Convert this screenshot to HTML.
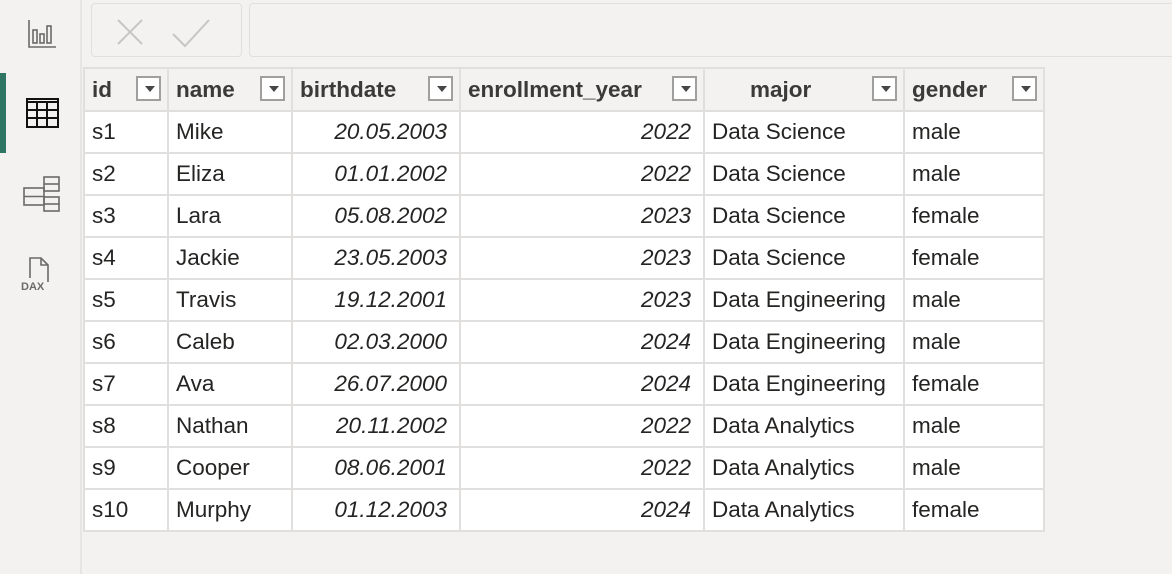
<!DOCTYPE html>
<html><head><style>
body{margin:0;width:1172px;height:574px;background:#f3f2f1;position:relative;overflow:hidden;font-family:"Liberation Sans",sans-serif;}
.side{position:absolute;left:0;top:0;width:80px;height:574px;background:#f3f2f1;border-right:2px solid #e6e5e3;}
.ind{position:absolute;left:0;top:73px;width:6px;height:80px;background:#2f7563;}
.box{position:absolute;top:3px;height:52px;border:1px solid #e1dfdd;border-radius:4px;background:#f3f2f1;}
table{position:absolute;left:83px;top:67px;border-collapse:collapse;table-layout:fixed;}
td,th{border:2px solid #e1dfdd;height:40px;padding:0 7px;font-size:22.5px;color:#252423;white-space:nowrap;overflow:hidden;}
th{background:#f3f2f1;font-weight:bold;color:#3b3a39;text-align:left;position:relative;height:41px;}
th .dd{position:absolute;right:6px;top:7px;width:25px;height:25px;border:2px solid #a19f9d;background:#fff;box-sizing:border-box;}
th .dd:after{content:"";position:absolute;left:7px;top:8px;border-left:5px solid transparent;border-right:5px solid transparent;border-top:6px solid #484644;}
td{background:#fff;}
td.r{text-align:right;font-style:italic;padding-right:12px;}
</style></head><body>
<div class="side">
<svg style="position:absolute;left:27px;top:20px" width="30" height="28" viewBox="0 0 30 28" fill="none" stroke="#6b6a69" stroke-width="1.6"><path d="M2 0V27H29"/><rect x="6" y="10" width="4" height="13"/><rect x="13" y="14" width="4" height="9"/><rect x="20" y="6" width="4" height="17"/></svg>
<svg style="position:absolute;left:26px;top:98px" width="33" height="30" viewBox="0 0 33 30" fill="none" stroke="#111" stroke-width="2"><rect x="1" y="1" width="31" height="28"/><path d="M1 4H32M1 12H32M1 20H32M11 4V29M21 4V29"/></svg>
<svg style="position:absolute;left:23px;top:176px" width="38" height="36" viewBox="0 0 38 36" fill="none" stroke="#6b6a69" stroke-width="1.6"><rect x="1" y="12" width="20" height="17"/><path d="M1 20.5H21"/><rect x="21" y="1" width="15" height="14"/><path d="M21 8H36"/><rect x="21" y="21" width="15" height="14"/><path d="M21 28H36"/></svg>
<svg style="position:absolute;left:20px;top:256px" width="40" height="36" viewBox="0 0 40 36" fill="none" stroke="#6b6a69" stroke-width="1.6"><path d="M10 22V2H21L28 9V22M21 2V9H28M28 22V26"/><text x="1" y="34" font-size="11" font-family="Liberation Sans" fill="#6b6a69" stroke="none" font-weight="bold">DAX</text></svg>
</div>
<div class="ind"></div>
<div class="box" style="left:91px;width:149px">
<svg style="position:absolute;left:24px;top:14px" width="28" height="28" stroke="#c8c6c4" stroke-width="2"><path d="M2 2L26 26M26 2L2 26"/></svg>
<svg style="position:absolute;left:80px;top:14px" width="38" height="30" fill="none" stroke="#c8c6c4" stroke-width="2"><path d="M1 16L13 28L37 2"/></svg>
</div>
<div class="box" style="left:249px;width:930px"></div>
<table>
<colgroup><col style="width:84px"><col style="width:124px"><col style="width:168px"><col style="width:244px"><col style="width:200px"><col style="width:140px"></colgroup>
<tr><th>id<span class="dd"></span></th><th>name<span class="dd"></span></th><th>birthdate<span class="dd"></span></th><th>enrollment_year<span class="dd"></span></th><th style="padding-left:45px">major<span class="dd"></span></th><th>gender<span class="dd"></span></th></tr>
<tr><td>s1</td><td>Mike</td><td class="r">20.05.2003</td><td class="r">2022</td><td>Data Science</td><td>male</td></tr>
<tr><td>s2</td><td>Eliza</td><td class="r">01.01.2002</td><td class="r">2022</td><td>Data Science</td><td>male</td></tr>
<tr><td>s3</td><td>Lara</td><td class="r">05.08.2002</td><td class="r">2023</td><td>Data Science</td><td>female</td></tr>
<tr><td>s4</td><td>Jackie</td><td class="r">23.05.2003</td><td class="r">2023</td><td>Data Science</td><td>female</td></tr>
<tr><td>s5</td><td>Travis</td><td class="r">19.12.2001</td><td class="r">2023</td><td>Data Engineering</td><td>male</td></tr>
<tr><td>s6</td><td>Caleb</td><td class="r">02.03.2000</td><td class="r">2024</td><td>Data Engineering</td><td>male</td></tr>
<tr><td>s7</td><td>Ava</td><td class="r">26.07.2000</td><td class="r">2024</td><td>Data Engineering</td><td>female</td></tr>
<tr><td>s8</td><td>Nathan</td><td class="r">20.11.2002</td><td class="r">2022</td><td>Data Analytics</td><td>male</td></tr>
<tr><td>s9</td><td>Cooper</td><td class="r">08.06.2001</td><td class="r">2022</td><td>Data Analytics</td><td>male</td></tr>
<tr><td>s10</td><td>Murphy</td><td class="r">01.12.2003</td><td class="r">2024</td><td>Data Analytics</td><td>female</td></tr>
</table>
</body></html>
